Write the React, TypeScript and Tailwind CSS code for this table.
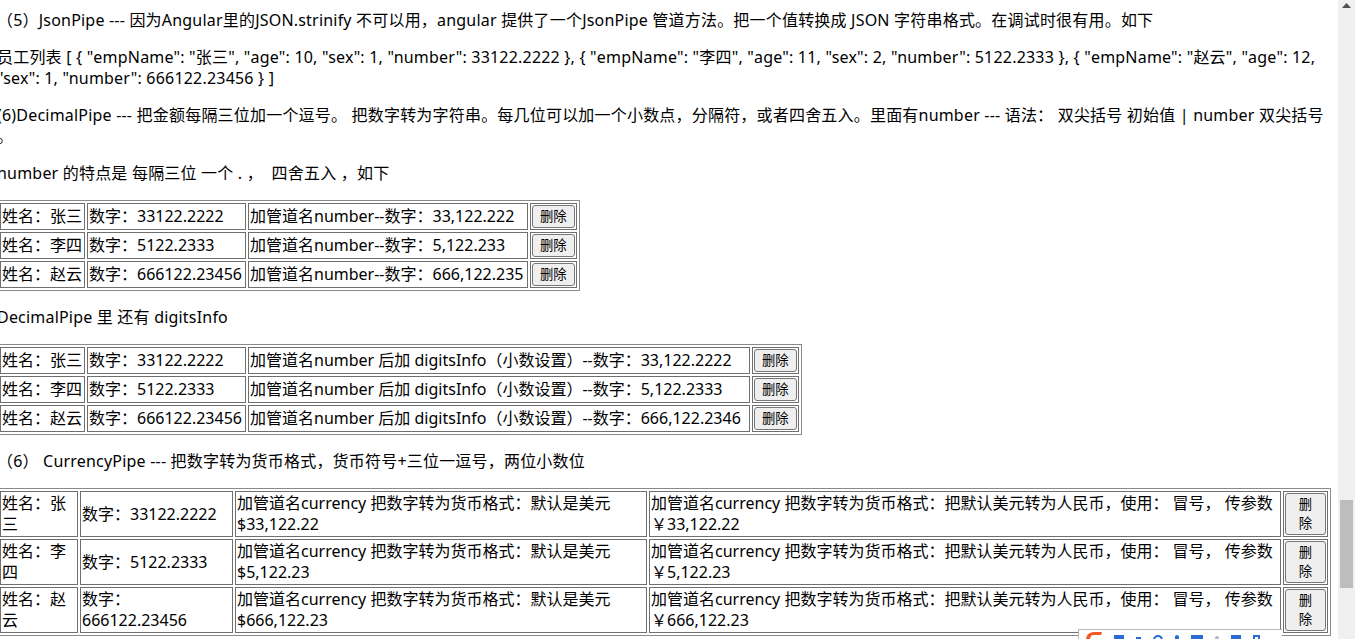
import React from 'react';

type Emp = { name: string; num: string; dec: string; digits: string; usd: string; cny: string };

const emps: Emp[] = [
  { name: '张三', num: '33122.2222', dec: '33,122.222', digits: '33,122.2222', usd: '$33,122.22', cny: '￥33,122.22' },
  { name: '李四', num: '5122.2333', dec: '5,122.233', digits: '5,122.2333', usd: '$5,122.23', cny: '￥5,122.23' },
  { name: '赵云', num: '666122.23456', dec: '666,122.235', digits: '666,122.2346', usd: '$666,122.23', cny: '￥666,122.23' },
];

const font = 'font-["Noto_Sans","Noto_Sans_CJK_SC",sans-serif]';
const cell = 'border border-[#6f6f6f] p-[1px] align-middle whitespace-normal';
const tableCls = 'border-separate border-spacing-[2px] border border-[#8a8a8a]';

function DelButton({ narrow }: { narrow?: boolean }) {
  return (
    <button
      className={`bg-[#efefef] border border-[#767676] rounded-[3px] text-[13.333px] text-black ${
        narrow ? 'w-[41px] px-[8px] py-[1px] leading-[19px]' : 'whitespace-nowrap px-[7px] py-[1px] leading-[19px]'
      }`}
    >
      删除
    </button>
  );
}

function Para({ children }: { children: React.ReactNode }) {
  return <p className="my-4 leading-[21px] tracking-[0.2px]">{children}</p>;
}

export default function App() {
  return (
    <div className={`relative flex h-[639px] w-[1355px] overflow-hidden bg-white text-black text-[16px] ${font}`}>
      <div className="w-[1338px] overflow-hidden">
        <div className="-ml-[3px] -mt-[6px] w-[1330px]">
          <Para>（5）JsonPipe --- 因为Angular里的JSON.strinify 不可以用，angular 提供了一个JsonPipe 管道方法。把一个值转换成 JSON 字符串格式。在调试时很有用。如下</Para>
          <Para>
            员工列表 [ {'{'} "empName": "张三", "age": 10, "sex": 1, "number": 33122.2222 {'}'}, {'{'} "empName": "李四", "age": 11, "sex": 2, "number": 5122.2333 {'}'}, {'{'} "empName": "赵云", "age": 12, "sex": 1, "number": 666122.23456 {'}'} ]
          </Para>
          <Para>(6)DecimalPipe --- 把金额每隔三位加一个逗号。 把数字转为字符串。每几位可以加一个小数点，分隔符，或者四舍五入。里面有number --- 语法： 双尖括号 初始值 | number 双尖括号 。</Para>
          <Para>number 的特点是 每隔三位 一个 . ，&nbsp; 四舍五入 ，如下</Para>

          <table className={tableCls}>
            <tbody>
              {emps.map((e) => (
                <tr key={e.name} className="leading-[21px]">
                  <td className={`${cell} w-[85px] whitespace-nowrap`}>姓名：{e.name}</td>
                  <td className={`${cell} w-[159px] whitespace-nowrap`}>数字：{e.num}</td>
                  <td className={`${cell} w-[280px] whitespace-nowrap`}>加管道名number--数字：{e.dec}</td>
                  <td className={`${cell} w-[47px]`}>
                    <DelButton />
                  </td>
                </tr>
              ))}
            </tbody>
          </table>

          <Para>DecimalPipe 里 还有 digitsInfo</Para>

          <table className={tableCls}>
            <tbody>
              {emps.map((e) => (
                <tr key={e.name} className="leading-[21px]">
                  <td className={`${cell} w-[85px] whitespace-nowrap`}>姓名：{e.name}</td>
                  <td className={`${cell} w-[159px] whitespace-nowrap`}>数字：{e.num}</td>
                  <td className={`${cell} w-[502px] whitespace-nowrap`}>加管道名number 后加 digitsInfo（小数设置）--数字：{e.digits}</td>
                  <td className={`${cell} w-[47px]`}>
                    <DelButton />
                  </td>
                </tr>
              ))}
            </tbody>
          </table>

          <Para>（6） CurrencyPipe --- 把数字转为货币格式，货币符号+三位一逗号，两位小数位</Para>

          <table className={`${tableCls} table-fixed w-[1334px]`}>
            <tbody>
              {emps.map((e) => (
                <tr key={e.name} className="leading-[21px]">
                  <td className={`${cell} w-[78px]`}>姓名：{e.name}</td>
                  <td className={`${cell} w-[153px]`}>数字：{e.num}</td>
                  <td className={`${cell} w-[412px]`}>加管道名currency 把数字转为货币格式：默认是美元 {e.usd}</td>
                  <td className={`${cell} w-[632px]`}>加管道名currency 把数字转为货币格式：把默认美元转为人民币，使用： 冒号， 传参数 {e.cny}</td>
                  <td className={`${cell} w-[45px]`}>
                    <DelButton narrow />
                  </td>
                </tr>
              ))}
            </tbody>
          </table>
        </div>
      </div>

      {/* scrollbar */}
      <div className="flex w-[17px] flex-col items-center bg-[#f0f0f0]">
        <svg width="9" height="6" viewBox="0 0 9 6" className="mt-[3px]">
          <path d="M4.5 0 L9 5 L0 5 Z" fill="#505050" />
        </svg>
        <div className="mt-[491px] h-[88px] w-[13px] bg-[#bdbdbd]" />
      </div>

      {/* IME toolbar */}
      <div className="absolute bottom-0 left-[1078px] flex h-[10px] w-[204px] items-start gap-[10px] border-l border-t border-[#b8b8b8] bg-white pl-[5px] pt-[1px]">
        <svg width="20" height="9" viewBox="0 0 20 9">
          <path d="M2 9 C2 3 6 1 12 1 L18 1 L17 4 L10 4 C7 4 6 6 6 9 Z" fill="#f15a24" />
        </svg>
        <div className="flex items-end gap-[12px] pt-[4px]">
          <span className="h-[5px] w-[10px] bg-[#2b6cd4]" />
          <span className="h-[3px] w-[5px] bg-[#2b6cd4]" />
          <span className="h-[5px] w-[10px] rounded-t-full border-2 border-b-0 border-[#2b6cd4]" />
          <span className="h-[5px] w-[4px] rounded-t-full bg-[#2b6cd4]" />
          <span className="h-[5px] w-[12px] bg-[#2b6cd4]" />
          <span className="h-[4px] w-[4px] rounded-t-full bg-[#b0b8c8]" />
          <span className="h-[5px] w-[10px] bg-[#2b6cd4]" />
          <span className="h-[5px] w-[7px] border-2 border-b-0 border-[#2b6cd4]" />
        </div>
      </div>
    </div>
  );
}
